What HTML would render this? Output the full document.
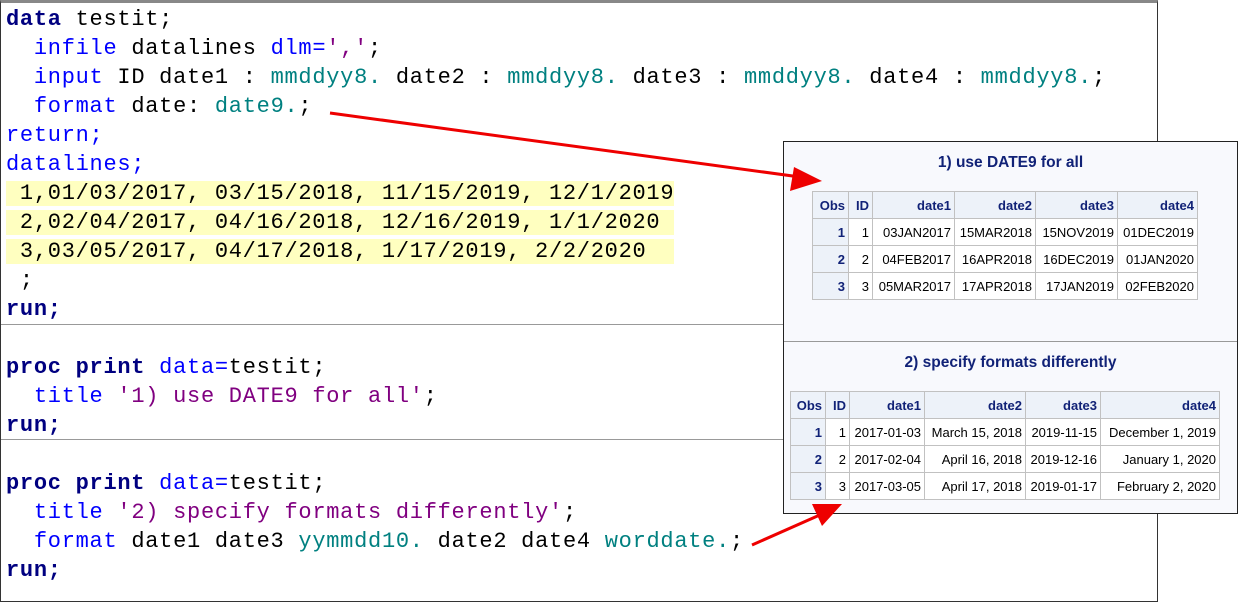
<!DOCTYPE html>
<html><head><style>
body{margin:0;width:1238px;height:601px;background:#fff;position:relative;overflow:hidden;font-family:"Liberation Mono",monospace}
#code{position:absolute;left:0;top:0;width:1156px;height:598px;border:1px solid #333;border-top:3px solid #888;background:#fff}
.l{position:absolute;left:5px;height:29px;line-height:29px;font-size:22px;letter-spacing:0.72px;white-space:pre;color:#000}
.k{color:#000080;font-weight:bold}.b{color:#0000ff}.t{color:#008080}.s{color:#800080}
.y{background:#ffffc0}
.sep{position:absolute;left:0;width:1156px;height:1px;background:#999}
#out{position:absolute;left:783px;top:141px;width:453px;height:371px;border:1px solid #222;background:#f8f9fd;font-family:"Liberation Sans",sans-serif}
.ti{position:absolute;left:0;width:453px;text-align:center;color:#112277;font-weight:bold;font-size:15.5px}
table{position:absolute;border-collapse:collapse;font-size:13px;table-layout:fixed}
td,th{border:1px solid #c1c1c1;height:26px;padding:0 3px;text-align:right;background:#fff;color:#000;white-space:nowrap}
th{background:#edf2f9;color:#112277;font-weight:bold}
td.h{background:#edf2f9;color:#112277;font-weight:bold}
</style></head><body>
<div id="code">
<div class="l" style="top:2px"><span class="k">data</span> testit;</div>
<div class="l" style="top:31px">  <span class="b">infile</span> datalines <span class="b">dlm=</span><span class="s">','</span>;</div>
<div class="l" style="top:60px">  <span class="b">input</span> ID date1 : <span class="t">mmddyy8.</span> date2 : <span class="t">mmddyy8.</span> date3 : <span class="t">mmddyy8.</span> date4 : <span class="t">mmddyy8.</span>;</div>
<div class="l" style="top:89px">  <span class="b">format</span> date: <span class="t">date9.</span>;</div>
<div class="l b" style="top:118px">return;</div>
<div class="l b" style="top:147px">datalines;</div>
<div class="l" style="top:176px"><span class="y"> 1,01/03/2017, 03/15/2018, 11/15/2019, 12/1/2019</span></div>
<div class="l" style="top:205px"><span class="y"> 2,02/04/2017, 04/16/2018, 12/16/2019, 1/1/2020 </span></div>
<div class="l" style="top:234px"><span class="y"> 3,03/05/2017, 04/17/2018, 1/17/2019, 2/2/2020  </span></div>
<div class="l" style="top:263px"> ;</div>
<div class="l k" style="top:292px">run;</div>
<div class="sep" style="top:321px"></div>
<div class="l" style="top:350px"><span class="k">proc print</span> <span class="b">data=</span>testit;</div>
<div class="l" style="top:379px">  <span class="b">title</span> <span class="s">'1) use DATE9 for all'</span>;</div>
<div class="l k" style="top:408px">run;</div>
<div class="sep" style="top:436px"></div>
<div class="l" style="top:466px"><span class="k">proc print</span> <span class="b">data=</span>testit;</div>
<div class="l" style="top:495px">  <span class="b">title</span> <span class="s">'2) specify formats differently'</span>;</div>
<div class="l" style="top:524px">  <span class="b">format</span> date1 date3 <span class="t">yymmdd10.</span> date2 date4 <span class="t">worddate.</span>;</div>
<div class="l k" style="top:553px">run;</div>
</div>
<div id="out">
<div class="ti" style="top:12px">1) use DATE9 for all</div>
<table style="left:28px;top:49px;width:385px">
<col style="width:36px"><col style="width:24px"><col style="width:82px"><col style="width:81px"><col style="width:82px"><col style="width:80px">
<tr><th>Obs</th><th>ID</th><th>date1</th><th>date2</th><th>date3</th><th>date4</th></tr>
<tr><td class="h">1</td><td>1</td><td>03JAN2017</td><td>15MAR2018</td><td>15NOV2019</td><td>01DEC2019</td></tr>
<tr><td class="h">2</td><td>2</td><td>04FEB2017</td><td>16APR2018</td><td>16DEC2019</td><td>01JAN2020</td></tr>
<tr><td class="h">3</td><td>3</td><td>05MAR2017</td><td>17APR2018</td><td>17JAN2019</td><td>02FEB2020</td></tr>
</table>
<div style="position:absolute;left:0;top:199px;width:453px;height:1px;background:#999"></div>
<div class="ti" style="top:212px">2) specify formats differently</div>
<table style="left:6px;top:249px;width:429px">
<col style="width:35px"><col style="width:24px"><col style="width:75px"><col style="width:101px"><col style="width:75px"><col style="width:119px">
<tr><th>Obs</th><th>ID</th><th>date1</th><th>date2</th><th>date3</th><th>date4</th></tr>
<tr><td class="h">1</td><td>1</td><td>2017-01-03</td><td>March 15, 2018</td><td>2019-11-15</td><td>December 1, 2019</td></tr>
<tr><td class="h">2</td><td>2</td><td>2017-02-04</td><td>April 16, 2018</td><td>2019-12-16</td><td>January 1, 2020</td></tr>
<tr><td class="h">3</td><td>3</td><td>2017-03-05</td><td>April 17, 2018</td><td>2019-01-17</td><td>February 2, 2020</td></tr>
</table>
</div>
<svg width="1238" height="601" style="position:absolute;left:0;top:0">
<g stroke="#e00" stroke-width="3" fill="#e00">
<line x1="330" y1="113" x2="800" y2="177"/>
<polygon points="822,181 794,167 790,191" stroke="none"/>
<line x1="752" y1="545" x2="822" y2="514"/>
<polygon points="842,504 812,504 822,526" stroke="none"/>
</g>
</svg>
</body></html>
